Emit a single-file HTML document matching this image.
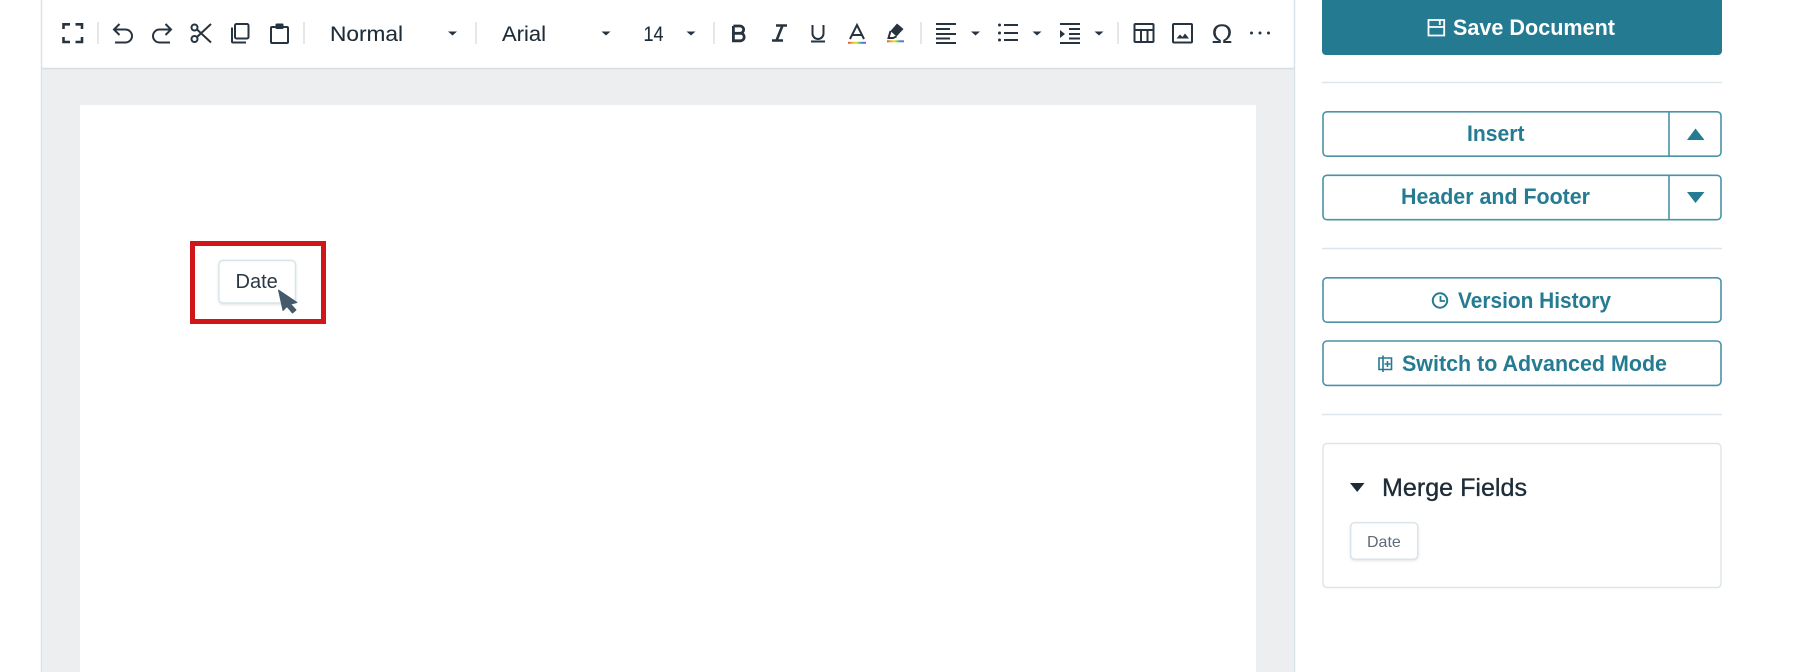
<!DOCTYPE html>
<html><head><meta charset="utf-8"><style>
html,body{margin:0;padding:0;background:#fff;width:1800px;height:672px;overflow:hidden}
svg{display:block;filter:blur(.3px)}
text{font-family:"Liberation Sans",sans-serif}
.t{fill:#1e2c38;font-size:21px;stroke:#1e2c38;stroke-width:.1}
.b{fill:#247b92;font-size:22px;font-weight:700}
.i{fill:none;stroke:#27343f;stroke-width:2}
.s{fill:#27343f}
.sep{stroke:#d8e1e6;stroke-width:1.5}
.btn{fill:#fff;stroke:#4a93a7;stroke-width:1.6}
.hr{stroke:#dde6ea;stroke-width:1.5}
</style></head><body>
<svg width="1800" height="672" viewBox="0 0 1800 672" xmlns="http://www.w3.org/2000/svg">
<defs>
<linearGradient id="rb" x1="0" x2="1" y1="0" y2="0"><stop offset="0" stop-color="#f0483a"/><stop offset=".25" stop-color="#f2b02a"/><stop offset=".45" stop-color="#e6e03a"/><stop offset=".65" stop-color="#40c868"/><stop offset=".82" stop-color="#4a7ae8"/><stop offset="1" stop-color="#c040e0"/></linearGradient>
<filter id="sh" x="-20%" y="-20%" width="140%" height="150%"><feDropShadow dx="0" dy="1" stdDeviation="1.2" flood-color="#9fb0bb" flood-opacity=".35"/></filter>
</defs>
<rect width="1800" height="672" fill="#fff"/>
<!-- editor -->
<path d="M41.500 0V672M1294.500 0V672" stroke="#d9e2e7" stroke-width="1.500" fill="none"/>
<rect x="42" y="69" width="1252" height="603" fill="#eceef0"/>
<path d="M42 68.500H1294" stroke="#d5dfe5" stroke-width="1.500"/>
<rect x="80" y="105" width="1176" height="567" fill="#fff"/>
<!-- separators -->
<path class="sep" d="M98 22V44M304 22V44M476 22V44M714 22V44M921 22V44M1118 22V44"/>
<!-- fullscreen -->
<path class="i" style="stroke-width:2.600" d="M63.500 29V24.300H70M75.500 24.300H82V29M63.500 37V42H70M75.500 42H82V37"/>
<!-- undo -->
<path class="i" d="M119.500 24L114 29.500L119.500 35M114 29.500H125.500A6.500 6.500 0 0 1 125.500 42.500H115"/>
<!-- redo -->
<path class="i" d="M165.500 24L171 29.500L165.500 35M171 29.500H159.500A6.500 6.500 0 0 0 159.500 42.500H170"/>
<!-- scissors -->
<circle class="i" cx="194.500" cy="27.500" r="3"/><circle class="i" cx="194.500" cy="39" r="3"/>
<path class="i" d="M197 29.500L211 42.500M197 37L211 24"/>
<!-- copy -->
<rect class="i" x="235" y="24" width="13.500" height="14.500" rx="1.500"/>
<path class="i" d="M232 27.500V41.500A1 1 0 0 0 233 42.500H246"/>
<!-- paste -->
<rect class="i" x="271" y="27" width="17" height="16" rx="1"/>
<rect class="s" x="275.500" y="23.500" width="8" height="5.500" rx="1"/>
<!-- toolbar text -->
<text class="t" x="330" y="41" textLength="73" lengthAdjust="spacingAndGlyphs">Normal</text>
<text class="t" x="502" y="41" textLength="44" lengthAdjust="spacingAndGlyphs">Arial</text>
<text class="t" x="643.500" y="41" textLength="20" lengthAdjust="spacingAndGlyphs">14</text>
<!-- carets -->
<path class="s" d="M448 31.500H457L452.500 35.500ZM601.500 31.500H610.500L606 35.500ZM686.500 31.500H695.500L691 35.500ZM971 31.500H980L975.500 35.500ZM1032.500 31.500H1041.500L1037 35.500ZM1094.500 31.500H1103.500L1099 35.500Z"/>
<!-- B I U A -->
<path class="i" style="stroke-width:2.800" d="M733.400 26H740A3.600 3.600 0 0 1 740 33.300H733.400M740 33.300H741A3.800 3.800 0 0 1 741 40.800H733.400V26"/>
<path class="i" style="stroke-width:2.600" d="M776 25.500H787M772 40.500H783M782.500 25.500L776.500 40.500"/>
<path class="i" d="M812.500 25V33.500A5.500 5.500 0 0 0 823.500 33.500V25M811 41.500H825"/>
<path class="i" d="M850 39L857 25L864 39M852 35H862"/>
<rect x="848" y="41.800" width="18" height="2" fill="url(#rb)"/>
<path class="s" d="M897 23.500L903.500 29L896.500 36.500L890.500 31Z"/><path class="i" d="M890.500 31L888.500 38H893L896.500 36.500"/>
<rect x="887" y="40.300" width="17" height="2" fill="url(#rb)"/>
<!-- align -->
<path class="i" d="M936 24H956M936 29H950M936 34H956M936 38.500H950M936 43H956"/>
<!-- list -->
<path class="i" d="M1004 25H1018M1004 33H1018M1004 40H1018"/>
<circle class="s" cx="999.500" cy="25" r="1.500"/><circle class="s" cx="999.500" cy="33" r="1.500"/><circle class="s" cx="999.500" cy="40" r="1.500"/>
<!-- indent -->
<path class="i" d="M1060 24H1080M1069 29H1080M1069 34H1080M1069 38.500H1080M1060 43H1080"/>
<path class="s" d="M1060 30V38L1065 34Z"/>
<!-- table -->
<rect class="i" x="1134.500" y="24" width="19" height="18" rx="1"/>
<path class="i" d="M1134.500 30H1153.500M1141 30V42M1147.500 30V42"/>
<!-- image -->
<rect class="i" x="1173" y="24" width="19" height="18.500" rx="1"/>
<path class="s" d="M1176.500 38.500L1180 34.500L1182.500 37L1185 33.500L1189 38.500Z"/>
<!-- omega -->
<text x="1211.500" y="43" style="font-size:27px;fill:#27343f" textLength="21" lengthAdjust="spacingAndGlyphs">Ω</text>
<!-- dots -->
<circle class="s" cx="1251.500" cy="33" r="1.500"/><circle class="s" cx="1260" cy="33" r="1.500"/><circle class="s" cx="1268.500" cy="33" r="1.500"/>
<!-- red box + chip -->
<rect x="192.500" y="243.500" width="131" height="78" fill="none" stroke="#d01618" stroke-width="5"/>
<rect x="219" y="260.500" width="76.500" height="42.500" rx="4" fill="#fff" stroke="#d9e3e9" stroke-width="1.400" filter="url(#sh)"/>
<text x="235.500" y="288" style="font-size:20px;fill:#2b3742">Date</text>
<!-- cursor -->
<path d="M278.500 290L297 302.500L290.500 304L296 310L292.500 313L287 306.500L283 310.500Z" fill="#44596a" stroke="#44596a" stroke-width="1" stroke-linejoin="round"/>
<!-- save -->
<path d="M1322 0H1722V51A4 4 0 0 1 1718 55H1326A4 4 0 0 1 1322 51Z" fill="#237a91"/>
<path d="M1428.500 20H1444.200V35.500H1428.500ZM1428.500 27H1444.200M1439.800 20V25" fill="none" stroke="#fff" stroke-width="1.800"/>
<text x="1453" y="35" style="font-size:22px;font-weight:700;fill:#fff" textLength="162" lengthAdjust="spacingAndGlyphs">Save Document</text>
<path class="hr" d="M1322 82.500H1722M1322 248.500H1722M1322 414.500H1722"/>
<!-- insert -->
<rect class="btn" x="1323" y="111.800" width="398" height="44.400" rx="4"/>
<text class="b" x="1467" y="141" textLength="57.500" lengthAdjust="spacingAndGlyphs">Insert</text>
<path d="M1695.500 128.500L1704.500 140H1687Z" fill="#247b92"/>
<!-- h&f -->
<rect class="btn" x="1323" y="175.300" width="398" height="44.400" rx="4"/>
<path d="M1669 112V156M1669 176V219.500" stroke="#4a93a7" stroke-width="1.600"/>
<text class="b" x="1401" y="204" textLength="189" lengthAdjust="spacingAndGlyphs">Header and Footer</text>
<path d="M1695.500 203L1704.500 192H1687Z" fill="#247b92"/>
<!-- version -->
<rect class="btn" x="1323" y="277.800" width="398" height="44.400" rx="4"/>
<circle cx="1440" cy="300.500" r="7.200" fill="none" stroke="#247b92" stroke-width="2"/>
<path d="M1440.500 296V301H1445" fill="none" stroke="#247b92" stroke-width="1.800"/>
<text class="b" x="1458" y="308" textLength="153" lengthAdjust="spacingAndGlyphs">Version History</text>
<!-- switch -->
<rect class="btn" x="1323" y="341" width="398" height="44.400" rx="4"/>
<path d="M1379 358H1391.500V369.500H1379ZM1383 355.500V372M1387.500 361V367M1384.500 364H1390.500" fill="none" stroke="#247b92" stroke-width="1.600"/>
<text class="b" x="1402" y="371" textLength="265" lengthAdjust="spacingAndGlyphs">Switch to Advanced Mode</text>
<!-- merge -->
<rect x="1323" y="443.500" width="398" height="144" rx="4" fill="#fff" stroke="#dde5ea" stroke-width="1.500"/>
<path d="M1350 483H1364.500L1357.200 492Z" fill="#1e2c38"/>
<text x="1382" y="496" style="font-size:25px;fill:#1e2c38;stroke:#1e2c38;stroke-width:.35" textLength="145" lengthAdjust="spacingAndGlyphs">Merge Fields</text>
<rect x="1350.700" y="522.700" width="67" height="36.500" rx="4" fill="#fff" stroke="#d9e3e9" stroke-width="1.400" filter="url(#sh)"/>
<text x="1367" y="547" style="font-size:16px;fill:#5f6b76">Date</text>
</svg>
</body></html>
